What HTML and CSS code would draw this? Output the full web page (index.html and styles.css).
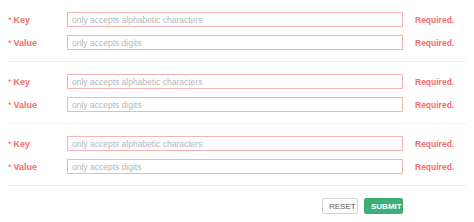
FILE: index.html
```html
<!DOCTYPE html>
<html>
<head>
<meta charset="utf-8">
<title>Key / Value</title>
<link rel="stylesheet" href="styles.css">
</head>
<body>

<form class="kv">
<div class="group">
	<div class="row">
		<label class="lbl"><span class="star">*</span>Key</label>
		<input class="fld" type="text" placeholder="only accepts alphabetic characters">
		<span class="err">Required.</span>
	</div>
	<div class="row">
		<label class="lbl"><span class="star">*</span>Value</label>
		<input class="fld" type="text" placeholder="only accepts digits">
		<span class="err">Required.</span>
	</div>
</div>
<div class="group">
	<div class="row">
		<label class="lbl"><span class="star">*</span>Key</label>
		<input class="fld" type="text" placeholder="only accepts alphabetic characters">
		<span class="err">Required.</span>
	</div>
	<div class="row">
		<label class="lbl"><span class="star">*</span>Value</label>
		<input class="fld" type="text" placeholder="only accepts digits">
		<span class="err">Required.</span>
	</div>
</div>
<div class="group">
	<div class="row">
		<label class="lbl"><span class="star">*</span>Key</label>
		<input class="fld" type="text" placeholder="only accepts alphabetic characters">
		<span class="err">Required.</span>
	</div>
	<div class="row">
		<label class="lbl"><span class="star">*</span>Value</label>
		<input class="fld" type="text" placeholder="only accepts digits">
		<span class="err">Required.</span>
	</div>
</div>

<div class="actions">
	<button type="button" class="btn reset">RESET</button>
	<button type="button" class="btn submit">SUBMIT</button>
</div>
</form>

</body>
</html>
```

FILE: styles.css
```css
body{ margin:0 8px; font-family:"Liberation Sans", Arial, sans-serif; font-size:9px; background:#fff;}

.group{ padding:12px 0 11px; border-bottom:1px solid #efefef;}
.row{ display:flex; align-items:center; height:15px;}
.row + .row{ margin-top:8px;}

.lbl{ width:59px; color:#f56c6c; font-weight:bold; font-size:9px;}
.star{ margin-right:2px; font-size:9px; font-weight:normal;}

.fld{ box-sizing:border-box; width:336px; height:15px; margin:0; padding:0 4px; border:1px solid #f7b3b3; outline:none;
	font-family:"Liberation Sans", Arial, sans-serif; font-size:8.5px; color:#606266; background:#fff;}
.fld::placeholder{ color:#b4b6ba;}

.err{ margin-left:12px; color:#f56c6c; font-weight:bold; font-size:8.5px;}

.actions{ display:flex; justify-content:flex-end; gap:6px; margin-top:12px; padding-right:63px;}
.btn{ box-sizing:border-box; height:16px; padding:0 6px; border-radius:2px; font-family:"Liberation Sans", Arial, sans-serif; font-size:8px; cursor:pointer;}
.reset{ width:36px; background:#fff; border:1px solid #d3d3d3; color:#555;}
.submit{ width:39px; background:#3dae74; border:1px solid #3dae74; color:#fff; font-weight:bold;}
```
